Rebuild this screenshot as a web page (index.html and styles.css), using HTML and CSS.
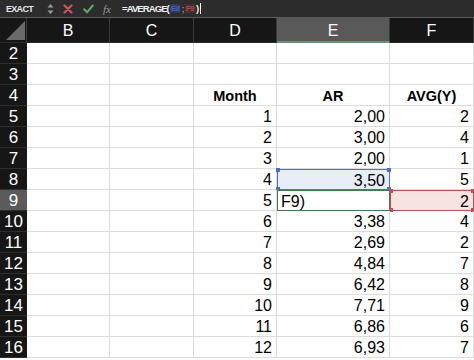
FILE: index.html
```html
<!DOCTYPE html>
<html>
<head>
<meta charset="utf-8">
<link rel="stylesheet" href="styles.css">
</head>
<body>
<div class="app">
  <div class="toolbar">
    <div class="namebox">EXACT</div>
    <div class="spin">
      <svg width="7" height="12" viewBox="0 0 7 12"><path d="M3.5 1 L6.5 4.5 H0.5 Z M3.5 11 L6.5 7.5 H0.5 Z" fill="#9a9a9a"/></svg>
    </div>
    <div class="tool tool-x">
      <svg width="10" height="10" viewBox="0 0 10 10"><path d="M1.5 1.5 L8.5 8.5 M8.5 1.5 L1.5 8.5" stroke="#d0555a" stroke-width="2.2" stroke-linecap="round"/></svg>
    </div>
    <div class="tool">
      <svg width="11" height="10" viewBox="0 0 11 10"><path d="M1.2 5.2 L4.2 8.2 L9.8 1.5" stroke="#5faa5f" stroke-width="2" fill="none" stroke-linecap="round" stroke-linejoin="round"/></svg>
    </div>
    <div class="fx">fx</div>
    <div class="formula">=AVERAGE(<span class="ref-b">E8</span><span class="sep">;</span><span class="ref-r">F9</span>)<span class="caret"></span></div>
  </div>
  <div class="sheet">
    <div class="corner"><span class="tri"></span></div>
    <div class="ch">B</div>
    <div class="ch">C</div>
    <div class="ch">D</div>
    <div class="ch ch-sel">E</div>
    <div class="ch">F</div>

    <div class="rh">2</div><div class="c"></div><div class="c"></div><div class="c"></div><div class="c"></div><div class="c"></div>
    <div class="rh">3</div><div class="c"></div><div class="c"></div><div class="c"></div><div class="c"></div><div class="c"></div>
    <div class="rh">4</div><div class="c"></div><div class="c"></div><div class="c hd">Month</div><div class="c hd">AR</div><div class="c hd">AVG(Y)</div>
    <div class="rh">5</div><div class="c"></div><div class="c"></div><div class="c n">1</div><div class="c n">2,00</div><div class="c n">2</div>
    <div class="rh">6</div><div class="c"></div><div class="c"></div><div class="c n">2</div><div class="c n">3,00</div><div class="c n">4</div>
    <div class="rh">7</div><div class="c"></div><div class="c"></div><div class="c n">3</div><div class="c n">2,00</div><div class="c n">1</div>
    <div class="rh">8</div><div class="c"></div><div class="c"></div><div class="c n">4</div><div class="c n sel-blue">3,50<i class="k tl"></i><i class="k tr"></i><i class="k bl"></i><i class="k br"></i></div><div class="c n">5</div>
    <div class="rh rh-sel">9</div><div class="c"></div><div class="c"></div><div class="c n">5</div><div class="c edit">F9)</div><div class="c n sel-red">2<i class="k tl"></i><i class="k tr"></i><i class="k bl"></i><i class="k br"></i></div>
    <div class="rh">10</div><div class="c"></div><div class="c"></div><div class="c n">6</div><div class="c n">3,38</div><div class="c n">4</div>
    <div class="rh">11</div><div class="c"></div><div class="c"></div><div class="c n">7</div><div class="c n">2,69</div><div class="c n">2</div>
    <div class="rh">12</div><div class="c"></div><div class="c"></div><div class="c n">8</div><div class="c n">4,84</div><div class="c n">7</div>
    <div class="rh">13</div><div class="c"></div><div class="c"></div><div class="c n">9</div><div class="c n">6,42</div><div class="c n">8</div>
    <div class="rh">14</div><div class="c"></div><div class="c"></div><div class="c n">10</div><div class="c n">7,71</div><div class="c n">9</div>
    <div class="rh">15</div><div class="c"></div><div class="c"></div><div class="c n">11</div><div class="c n">6,86</div><div class="c n">6</div>
    <div class="rh">16</div><div class="c"></div><div class="c"></div><div class="c n">12</div><div class="c n">6,93</div><div class="c n">7</div>
  </div>
</div>
</body>
</html>
```

FILE: styles.css
```css
* { box-sizing: border-box; }
html, body { margin: 0; padding: 0; background: #ffffff; overflow: hidden; }
.app { width: 474px; height: 360px; overflow: hidden; font-family: "Liberation Sans", Arial, sans-serif; }

.toolbar {
  height: 18px;
  background: #2c2c2c;
  border-bottom: 1px solid #5c5c5c;
  display: flex;
  align-items: center;
  color: #ffffff;
}
.namebox {
  width: 44px;
  padding-left: 6px;
  font-size: 9px;
  font-weight: bold;
  letter-spacing: -0.7px;
  color: #e8e8e8;
}
.spin { width: 12px; display: flex; justify-content: center; }
.tool { width: 20px; display: flex; justify-content: center; }
.tool-x { margin-left: 2px; }
.fx {
  width: 15px;
  margin-left: 5px;
  font-family: "Liberation Serif", "DejaVu Serif", serif;
  font-style: italic;
  font-size: 11px;
  color: #9a9a9a;
}
.formula {
  margin-left: 4px;
  font-size: 9.5px;
  font-weight: bold;
  color: #f0f0f0;
  display: flex;
  align-items: center;
  letter-spacing: -0.9px;
}
.ref-b { color: #3f63c8; background: #2f3a55; padding: 0 1px; font-size: 8px; letter-spacing: -0.6px; margin-left: 1px; }
.sep { color: #8a8a8a; margin: 0 1px; }
.ref-r { color: #b4474a; background: #4a2f31; padding: 0 1px; font-size: 8px; letter-spacing: -0.6px; margin-right: 1px; }
.caret { display: inline-block; width: 1px; height: 11px; background: #ffffff; margin-left: 2px; }

.sheet {
  display: grid;
  grid-template-columns: 27px 83px 84px 83px 113px 84px;
  grid-template-rows: 25px repeat(15, 21px);
}
.corner {
  background: #161616;
  border-right: 1px solid #3a3a3a;
  border-bottom: 1px solid #2a2a2a;
  position: relative;
}
.tri {
  position: absolute;
  right: 1px;
  bottom: 2px;
  width: 0;
  height: 0;
  border-left: 19px solid transparent;
  border-bottom: 19px solid #6a6a6a;
}
.ch {
  background: #161616;
  color: #ffffff;
  font-size: 16px;
  display: flex;
  align-items: center;
  justify-content: center;
  border-right: 1px solid #3a3a3a;
  border-bottom: 1px solid #2a2a2a;
  padding-top: 2px;
}
.ch-sel {
  background: #595959;
  border-bottom: 2px solid #6f9077;
}
.rh {
  background: #161616;
  color: #ffffff;
  font-size: 17px;
  display: flex;
  align-items: center;
  justify-content: center;
  border-bottom: 1px solid #2e2e2e;
  padding-top: 1px;
}
.rh-sel { background: #5b5b5b; }
.c {
  border-right: 1px solid #dcdcdc;
  border-bottom: 1px solid #dcdcdc;
  font-size: 16px;
  color: #000000;
  display: flex;
  align-items: center;
  padding: 2px 4px 0 4px;
  position: relative;
  white-space: nowrap;
}
.n { justify-content: flex-end; }
.hd { justify-content: center; font-weight: bold; font-size: 14.5px; }
.sel-blue {
  background: #e8edf8;
  border: 1px solid #4a72c4;
}
.sel-red {
  background: #f8e3e3;
  border: 1px solid #c0504d;
}
.edit {
  border: 1px solid #3f7a4f;
  padding-left: 3px;
}
.k {
  position: absolute;
  width: 4px;
  height: 4px;
}
.sel-blue .k { background: #4a72c4; }
.sel-red .k { background: #c0504d; }
.tl { left: -2px; top: -2px; }
.tr { right: -2px; top: -2px; }
.bl { left: -2px; bottom: -2px; }
.br { right: -2px; bottom: -2px; }
```
